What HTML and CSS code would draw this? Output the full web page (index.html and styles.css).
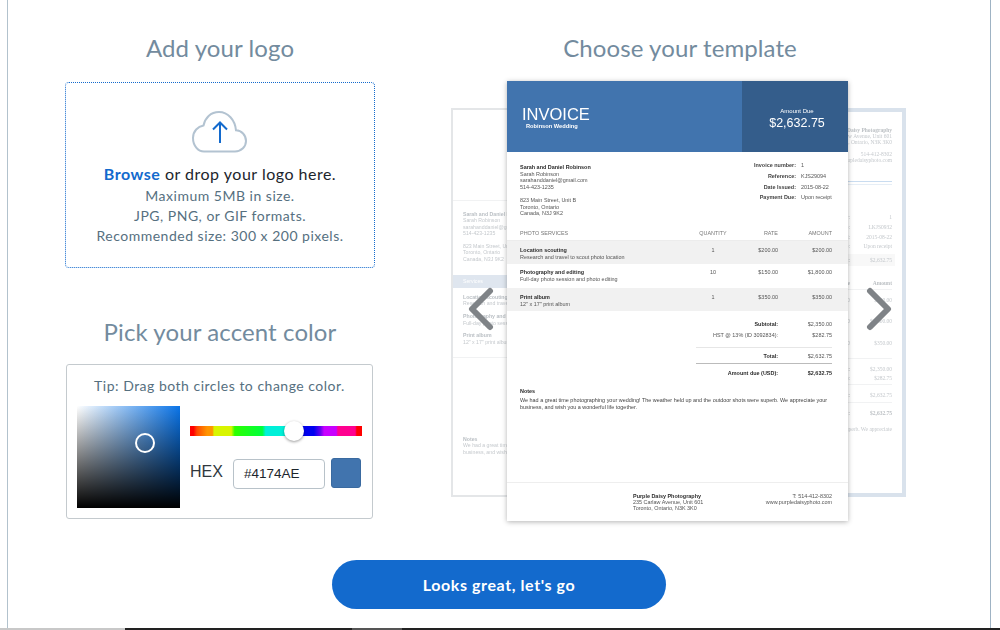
FILE: index.html
```html
<!DOCTYPE html>
<html lang="en">
<head>
<meta charset="utf-8">
<title>Invoice setup</title>
<link rel="stylesheet" href="styles.css">
</head>
<body>
<div class="frame">
  <div class="columns">
    <section class="left">
      <h2 class="title">Add your logo</h2>
      <div class="drop">
        <svg class="cloud" width="58" height="44" viewBox="0 0 58 44" fill="none">
          <path d="M13 41.500h31c6.500 0 11-5 11-10.500 0-6-4.500-10.500-10-10.700C44 10 37 2 28 2c-8.500 0-14 6-15.500 13.500C7 16.500 2 21 2 28c0 7.500 5 13.500 11 13.500z" stroke="#b3c3d1" stroke-width="2"/>
          <path d="M29 33V13M22 19.500l7-7 7 7" stroke="#136acd" stroke-width="2"/>
        </svg>
        <p class="drop-main"><a class="browse">Browse</a> or drop your logo here.</p>
        <p class="drop-sub">Maximum 5MB in size.</p>
        <p class="drop-sub">JPG, PNG, or GIF formats.</p>
        <p class="drop-sub">Recommended size: 300 x 200 pixels.</p>
      </div>
      <h2 class="title accent-title">Pick your accent color</h2>
      <div class="picker">
        <p class="tip">Tip: Drag both circles to change color.</p>
        <div class="picker-row">
          <div class="sat"><span class="sat-knob"></span></div>
          <div class="controls">
            <div class="hue"><span class="hue-knob"></span></div>
            <div class="hex-row">
              <span class="hex-label">HEX</span>
              <span class="hex-input">#4174AE</span>
              <span class="swatch"></span>
            </div>
          </div>
        </div>
      </div>
    </section>
    <section class="right">
      <h2 class="title">Choose your template</h2>
      <div class="carousel">
        <div class="side side-left">
          <div class="sl-block sl-a"><b>Sarah and Daniel Robinson</b><br>Sarah Robinson<br>sarahanddaniel@gmail.com<br>514-423-1235<br><br>823 Main Street, Unit B<br>Toronto, Ontario<br>Canada, N3J 9K2</div>
          <div class="sl-rule sl-rule-a"></div>
          <div class="sl-band">Services</div>
          <div class="sl-block sl-b"><b>Location scouting</b><br>Research and travel<br><br><b>Photography and editing</b><br>Full-day photo session<br><br><b>Print album</b><br>12" x 17" print album</div>
          <div class="sl-rule sl-rule-b"></div>
          <div class="sl-block sl-c"><b>Notes</b><br>We had a great time<br>business, and wish you</div>
        </div>
        <div class="side side-right">
          <div class="sr-block sr-a"><b>Purple Daisy Photography</b><br>235 Carlaw Avenue, Unit 601<br>Toronto, Ontario, N3K 3K0<br><br>514-412-8302<br>purpledaisyphoto.com</div>
          <div class="sr-rule"></div>
          <div class="sr-list">
            <div class="sr-line"><span>Invoice number:</span><span>1</span></div>
            <div class="sr-line g10"><span>Reference:</span><span>LKJS0932</span></div>
            <div class="sr-line g10"><span>Date Issued:</span><span>2015-08-22</span></div>
            <div class="sr-line g9"><span>Payment Due:</span><span>Upon receipt</span></div>
            <div class="sr-line g14 sr-shade"><b>Balance Due:</b><span>$2,632.75</span></div>
            <div class="sr-line g23"><b>Rate</b><b>Amount</b></div>
            <div class="sr-line g17 sr-ruled"><span>$200.00</span><span>$200.00</span></div>
            <div class="sr-line g21"><span>$150.00</span><span>$1,800.00</span></div>
            <div class="sr-line g22"><span>$350.00</span><span>$350.00</span></div>
            <div class="sr-line g26 sr-ruled"><b>Subtotal:</b><span>$2,350.00</span></div>
            <div class="sr-line g9"><span>(ID):</span><span>$282.75</span></div>
            <div class="sr-line g17 sr-ruled"><b>Total:</b><span>$2,632.75</span></div>
            <div class="sr-line g18 sr-ruled"><b>Due:</b><b>$2,632.75</b></div>
            <div class="sr-note g16">superb. We appreciate</div>
          </div>
        </div>
        <article class="doc">
          <header class="doc-head">
            <div class="doc-title">
              <div class="doc-invoice">INVOICE</div>
              <div class="doc-sub">Robinson Wedding</div>
            </div>
            <div class="doc-due">
              <div class="due-label">Amount Due</div>
              <div class="due-value">$2,632.75</div>
            </div>
          </header>
          <div class="doc-info">
            <div class="bill">
              <b>Sarah and Daniel Robinson</b><br>Sarah Robinson<br>sarahanddaniel@gmail.com<br>514-423-1235<br><br>823 Main Street, Unit B<br>Toronto, Ontario<br>Canada, N3J 9K2
            </div>
            <dl class="meta">
              <dt>Invoice number:</dt><dd>1</dd>
              <dt>Reference:</dt><dd>KJS29094</dd>
              <dt>Date Issued:</dt><dd>2015-08-22</dd>
              <dt>Payment Due:</dt><dd>Upon receipt</dd>
            </dl>
          </div>
          <div class="row row-head">
            <span class="c-name">PHOTO SERVICES</span><span class="c-qty">QUANTITY</span><span class="c-num">RATE</span><span class="c-num">AMOUNT</span>
          </div>
          <div class="row item item-a shade">
            <span class="c-name"><b>Location scouting</b><br>Research and travel to scout photo location</span><span class="c-qty">1</span><span class="c-num">$200.00</span><span class="c-num">$200.00</span>
          </div>
          <div class="row item item-b">
            <span class="c-name"><b>Photography and editing</b><br>Full-day photo session and photo editing</span><span class="c-qty">10</span><span class="c-num">$150.00</span><span class="c-num">$1,800.00</span>
          </div>
          <div class="row item item-a shade">
            <span class="c-name"><b>Print album</b><br>12" x 17" print album</span><span class="c-qty">1</span><span class="c-num">$350.00</span><span class="c-num">$350.00</span>
          </div>
          <div class="totals">
            <div class="t-row"><b>Subtotal:</b><span>$2,350.00</span></div>
            <div class="t-row"><span>HST @ 13% (ID 3092834):</span><span>$282.75</span></div>
            <div class="t-row t-total"><b>Total:</b><span>$2,632.75</span></div>
            <div class="t-row t-due"><b>Amount due (USD):</b><b>$2,632.75</b></div>
          </div>
          <div class="notes"><b>Notes</b>We had a great time photographing your wedding! The weather held up and the outdoor shots were superb. We appreciate your business, and wish you a wonderful life together.</div>
          <footer class="doc-foot">
            <div class="foot-mid"><b>Purple Daisy Photography</b><br>235 Carlaw Avenue, Unit 601<br>Toronto, Ontario, N3K 3K0</div>
            <div class="foot-right">T: 514-412-8302<br>www.purpledaisyphoto.com</div>
          </footer>
        </article>
        <svg class="chev chev-left" width="28" height="44" viewBox="0 0 28 44" fill="none"><path d="M23 4L5 22l18 18" stroke="#7f8387" stroke-width="6" stroke-linecap="round" stroke-linejoin="round"/></svg>
        <svg class="chev chev-right" width="28" height="44" viewBox="0 0 28 44" fill="none"><path d="M5 4l18 18L5 40" stroke="#7f8387" stroke-width="6" stroke-linecap="round" stroke-linejoin="round"/></svg>
      </div>
    </section>
  </div>
  <div class="actions"><button class="go">Looks great, let's go</button></div>
</div>
<div class="taskbar"></div>
</body>
</html>
```
FILE: styles.css
```css
html, body { margin: 0; padding: 0; }
body { width: 1000px; height: 630px; overflow: hidden; background: #fff; font-family: "Lato", "Liberation Sans", sans-serif; color: #1c252c; position: relative; }
b { font-weight: 700; }
p { margin: 0; }
.frame { box-sizing: border-box; width: 984px; height: 628px; margin-left: 7px; border-left: 1px solid #b2c2cd; border-right: 1px solid #9fb3c4; padding-top: 34px; }
.columns { display: flex; }
.title { margin: 0; font-size: 24px; font-weight: 400; line-height: 28px; letter-spacing: .1px; color: #738b9e; text-align: center; font-family: "Lato", sans-serif; }
.left { width: 310px; margin-left: 57px; }
.drop { box-sizing: border-box; width: 310px; height: 186px; margin-top: 20px; border: 1px dotted #136acd; border-radius: 4px; text-align: center; padding-top: 27px; }
.cloud { display: block; margin: 0 auto; }
.drop-main { font-size: 16px; line-height: 20px; letter-spacing: .5px; margin-top: 10px; margin-bottom: 2px; color: #1c252c; }
.browse { color: #136acd; font-weight: 700; }
.drop-sub { font-size: 14px; line-height: 20px; letter-spacing: .5px; color: #56707f; }
.accent-title { margin-top: 50px; }
.picker { box-sizing: border-box; width: 307px; height: 155px; margin: 18px 0 0 1px; border: 1px solid #c4cace; border-radius: 3px; padding: 13px 10px 0; }
.tip { font-size: 14px; line-height: 16px; letter-spacing: .5px; color: #56707f; text-align: center; white-space: nowrap; }
.picker-row { display: flex; margin-top: 12px; }
.sat { width: 103px; height: 102px; position: relative; background: linear-gradient(to bottom, rgba(0,0,0,0), #000), linear-gradient(to right, #fff, #0a74e8); }
.sat-knob { position: absolute; left: 58px; top: 27px; width: 16px; height: 16px; border: 2px solid #fff; border-radius: 50%; }
.controls { margin-left: 10px; flex: 1; }
.hue { position: relative; height: 10px; margin-top: 20px; width: 172px; background: linear-gradient(to right, #f00 0 2%, #ff4800 4%, #ff9500 10% 13%, #d8f500 14% 24%, #2dff00 26%, #00ff3c 42%, #00f0d8 44% 56%, #00a0ff 60%, #0000f0 66% 72%, #6a00f0 76%, #c800ff 78% 85%, #ff0090 86% 96%, #f00 97%); }
.hue-knob { position: absolute; left: 94px; top: -5px; width: 20px; height: 20px; background: #fff; border-radius: 50%; box-shadow: 0 1px 3px rgba(0,0,0,.4); }
.hex-row { display: flex; align-items: flex-start; margin-top: 22px; }
.hex-label { font-family: "Liberation Sans", sans-serif; font-size: 16px; line-height: 27px; width: 43px; color: #30383e; }
.hex-input { box-sizing: border-box; width: 92px; height: 30px; margin-top: 1px; border: 1px solid #b8c2c9; border-radius: 4px; font-family: "Liberation Sans", sans-serif; font-size: 13.500px; line-height: 28px; padding-left: 10px; }
.swatch { box-sizing: border-box; width: 30px; height: 30px; margin-left: 6px; background: #4174ae; border: 1px solid #3a6aa0; border-radius: 3px; }
.right { margin-left: 76px; width: 470px; position: relative; }
.right > .title { width: 282px; margin-left: 88px; white-space: nowrap; }
.carousel { position: relative; height: 440px; margin-top: 19px; font-family: "Liberation Sans", sans-serif; }
.side { position: absolute; box-sizing: border-box; overflow: hidden; filter: blur(.6px); }
.side-left { left: 0; top: 27px; width: 100px; height: 389px; border: 2px solid #e4e6e8; font-size: 5.200px; line-height: 6.400px; color: #c5c9cd; }
.side-left b { color: #bbc0c5; }
.sl-block { position: absolute; left: 10px; white-space: nowrap; }
.sl-a { top: 101px; }
.sl-rule { position: absolute; left: 0; right: 0; height: 1px; background: #f1f2f3; }
.sl-rule-a { top: 90px; }
.sl-rule-b { top: 247px; }
.sl-band { position: absolute; left: 0; right: 0; top: 165px; height: 13px; background: #dfe6ef; color: #fff; padding-left: 10px; line-height: 12px; }
.sl-b { top: 184px; }
.sl-c { top: 326px; }
.side-right { left: 300px; top: 27px; width: 155px; height: 389px; border: 4px solid #d9e2ec; font-family: "Liberation Serif", serif; font-size: 5.500px; line-height: 6px; color: #c4c8cc; text-align: right; }
.side-right b { color: #bcc0c4; }
.sr-block { position: absolute; right: 10px; white-space: nowrap; }
.sr-a { top: 15px; }
.sr-rule { position: absolute; left: 0; right: 10px; top: 69px; height: 2px; border-top: 1px solid #c9dcf0; border-bottom: 1px solid #e6eef6; }
.sr-list { position: absolute; top: 102px; right: 10px; width: 62px; }
.sr-line { display: flex; justify-content: space-between; white-space: nowrap; }
.sr-line > :first-child { width: 20px; display: flex; justify-content: flex-end; }
.sr-shade { background: #f8f8f8; box-shadow: 0 0 0 3px #f8f8f8; }
.sr-ruled { position: relative; }
.sr-ruled::before { content: ""; position: absolute; left: 0; right: 0; top: -8px; height: 1px; background: #f1f2f3; }
.sr-note { white-space: nowrap; text-align: right; }
.g9 { margin-top: 3px; }
.g10 { margin-top: 4px; }
.g14 { margin-top: 8px; }
.g16 { margin-top: 10px; }
.g17 { margin-top: 11px; }
.g18 { margin-top: 12px; }
.g21 { margin-top: 15px; }
.g22 { margin-top: 16px; }
.g23 { margin-top: 17px; }
.g26 { margin-top: 20px; }
.doc { position: absolute; left: 56px; top: 0; width: 341px; height: 440px; background: #fff; box-shadow: 0 1px 5px rgba(0,0,0,.3); font-size: 5.450px; line-height: 6.600px; color: #555; display: flex; flex-direction: column; filter: blur(.4px); }
.doc b { color: #2c2c2c; }
.doc-head { display: flex; height: 71px; flex: none; background: #4174ae; color: #fff; }
.doc-title { flex: 1; padding: 26px 0 0 15px; }
.doc-invoice { font-size: 16.500px; line-height: 15px; }
.doc-sub { font-size: 5.700px; line-height: 8px; padding-left: 4px; font-weight: 700; }
.doc-due { width: 106px; background: #345d8b; text-align: center; padding: 26px 0 0 4px; box-sizing: border-box; }
.due-label { font-size: 6px; line-height: 8px; }
.due-value { font-size: 12.500px; line-height: 16px; }
.doc-info { display: flex; justify-content: space-between; padding: 12px 16px 0 13px; height: 65px; flex: none; box-sizing: border-box; }
.meta { display: grid; grid-template-columns: 1fr 31px; column-gap: 5px; row-gap: 4.200px; margin: -2px 0 0; width: 90px; align-content: start; }
.meta dt { text-align: right; font-weight: 700; color: #444; white-space: nowrap; }
.meta dd { margin: 0; white-space: nowrap; }
.row { display: flex; padding: 0 16px 0 13px; flex: none; }
.c-name { flex: 1; white-space: nowrap; }
.c-qty { width: 30px; text-align: center; margin-right: -4px; white-space: nowrap; }
.c-num { width: 54px; text-align: right; white-space: nowrap; }
.row-head { height: 11px; margin-top: 13px; box-sizing: border-box; border-bottom: 1px solid #ececec; color: #777; }
.item { box-sizing: border-box; }
.item-a { height: 23px; padding-top: 6px; }
.item-b { height: 24px; padding-top: 5px; }
.item-a:last-of-type { padding-top: 5px; }
.shade { background: #f1f1f1; }
.totals { margin-left: 189px; margin-right: 16px; margin-top: 10px; flex: none; }
.t-row { display: flex; justify-content: flex-end; height: 11px; }
.t-row > :first-child { flex: 1; text-align: right; margin-right: 21px; white-space: nowrap; }
.t-row > :last-child { width: 33px; text-align: right; white-space: nowrap; }
.t-total { border-top: 1px solid #e6e6e6; margin-top: 4px; padding-top: 5px; height: 10px; }
.t-due { border-top: 1px solid #bbb; padding-top: 6px; height: 10px; }
.notes { padding: 0 18px 0 13px; margin-top: 8px; line-height: 7px; color: #444; }
.notes b { display: block; margin-bottom: 2px; }
.doc-foot { position: absolute; left: 0; right: 0; bottom: 0; height: 39px; box-sizing: border-box; border-top: 1px solid #eee; line-height: 6px; }
.foot-mid { position: absolute; left: 126px; top: 10px; }
.foot-right { position: absolute; right: 16px; top: 10px; text-align: right; }
.chev { position: absolute; }
.chev-left { left: 16px; top: 206px; }
.chev-right { left: 414px; top: 206px; }
.actions { text-align: center; margin-top: 39px; }
.go { width: 334px; height: 49px; border: 0; border-radius: 25px; background: #136acd; color: #fff; font-family: "Lato", sans-serif; font-size: 16px; font-weight: 700; letter-spacing: .6px; }
.taskbar { position: absolute; left: 0; right: 0; bottom: 0; height: 2px; background: linear-gradient(to right, #c8c8c8 0 125px, #222 125px 352px, #555 352px 402px, #222 402px); }
```
